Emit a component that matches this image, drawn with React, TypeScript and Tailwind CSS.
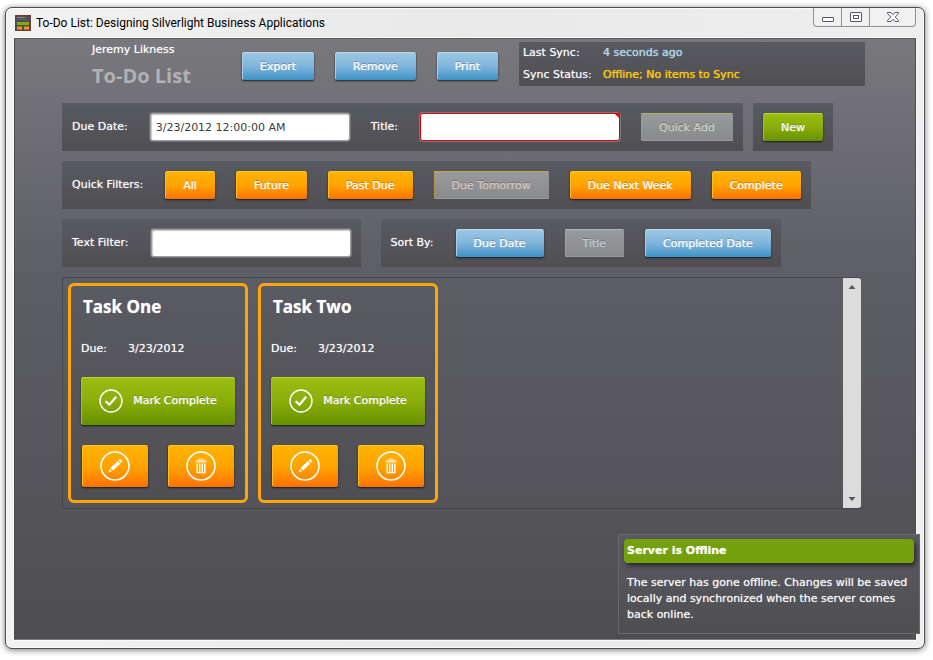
import { useState } from 'react';
import type { InputHTMLAttributes, ReactNode } from 'react';
import clsx from 'clsx';

type Tone = 'blue' | 'orange' | 'green';

const tones: Record<Tone, string> = {
  blue: 'border-t-[#bcdcee] border-l-[#a9d0e8] bg-linear-to-b from-[#9fc8e4] via-[#7fb6da] to-[#3b92c8]',
  orange: 'border-t-[#ffc81e] border-l-[#ffbe1e] bg-linear-to-b from-[#ffb400] via-[#ffa400] to-[#ff7000]',
  green: 'border-t-[#bcd62e] border-l-[#a5c22a] bg-linear-to-b from-[#9cbe11] via-[#8aae0a] to-[#679000]',
};

const disabledTones: Record<Tone, string> = {
  blue: 'border-t-[#9fb9c8] border-l-[#93a5b2] text-[#c0cbd6]',
  orange: 'border-t-[#c9a640] border-l-[#b39b52] text-[#d8c6c0]',
  green: 'border-t-[#a9b35a] border-l-[#9ba355] text-[#cbcec2]',
};

interface ButtonProps {
  tone: Tone;
  children: ReactNode;
  disabled?: boolean;
  className?: string;
  label?: string;
}

function Button({ tone, children, disabled, className = 'h-7 px-[17px] pt-0.5', label }: ButtonProps) {
  return (
    <button
      type="button"
      disabled={disabled}
      aria-label={label}
      className={clsx(
        'flex items-center justify-center border border-transparent whitespace-nowrap [text-shadow:0_-1px_0_rgb(0_0_0/0.3),0_0_1px_currentColor]',
        disabled
          ? ['bg-linear-to-b from-[#999a9d] to-[#898a8c]', disabledTones[tone]]
          : ['rounded-xs text-white bg-origin-border shadow-[0_1px_2px_rgb(0_0_0/0.7)] hover:brightness-105', tones[tone]],
        className,
      )}
    >
      {children}
    </button>
  );
}

function Panel({ children }: { children: ReactNode }) {
  return (
    <div className="flex items-center gap-[21px] p-2.5 bg-linear-to-b from-[#595a62] to-[#4f4f52]">
      {children}
    </div>
  );
}

interface FieldProps extends InputHTMLAttributes<HTMLInputElement> {
  id: string;
  label: string;
  invalid?: boolean;
}

function Field({ id, label, invalid, ...rest }: FieldProps) {
  return (
    <>
      <label htmlFor={id} className="pr-px">{label}</label>
      <div className="relative">
        <input
          id={id}
          type="text"
          aria-invalid={invalid}
          className={clsx(
            'block w-[200px] h-7 px-[5px] rounded-[3px] bg-white text-[#3c3c3c] outline-none',
            invalid
              ? 'border border-[#e80000] shadow-[0_0_0_1px_#77777a]'
              : 'border border-[#9c9c9f] shadow-[inset_1px_1px_1px_#c8c8c8,0_0_0_1px_#747478]',
          )}
          {...rest}
        />
        {invalid && (
          <svg className="absolute top-0 right-0 w-1.5 h-1.5" viewBox="0 0 6 6">
            <path d="M0 0H6V6Z" fill="#e80000" />
          </svg>
        )}
      </div>
    </>
  );
}

function CheckIcon() {
  return (
    <svg className="w-6 h-6" viewBox="0 0 24 24" fill="none" stroke="#fff">
      <circle cx="12" cy="12" r="11" strokeWidth="1.4" />
      <path d="M6.6 12.2L10.4 15.6L17.2 7.8" strokeWidth="2.2" />
    </svg>
  );
}

function PencilIcon() {
  return (
    <svg className="w-[30px] h-[30px]" viewBox="0 0 30 30" fill="none">
      <circle cx="15" cy="15" r="14" stroke="#fff" strokeWidth="1.6" />
      <path d="M10.4 16.9L17.6 10.2L20.2 12.7L13 19.4Z" fill="#fff" />
      <path d="M18.4 9.4L19.6 8.3Q20.4 7.8 21.1 8.5L21.9 9.4Q22.4 10.2 21.7 11L20.9 11.9Z" fill="#fff" />
      <path d="M9.7 18L12 20.3L8.5 21.3Z" fill="#fff" />
    </svg>
  );
}

function TrashIcon() {
  return (
    <svg className="w-[30px] h-[30px]" viewBox="0 0 30 30" fill="none">
      <circle cx="15" cy="15" r="14" stroke="#fff" strokeWidth="1.6" />
      <path d="M9.5 9.2H20.5V11.5H9.5Z" fill="#ffe3b8" />
      <path d="M13 9V8H17V9" stroke="#ffe3b8" strokeWidth="1.2" />
      <path d="M11.2 12.5V21.6H18.8V12.5M13.7 12.5V21.3M16.3 12.5V21.3" stroke="#fff" strokeWidth="1.4" />
    </svg>
  );
}

function TaskCard({ title, due }: { title: string; due: string }) {
  return (
    <article className="w-[180px] border-3 border-[#ffa50a] rounded-md px-2.5 pt-[9px] pb-[13px] bg-linear-to-b from-[#5a5a62] to-[#4f4f53]">
      <h2 className="px-0.5 font-['Open_Sans',sans-serif] font-bold text-[17px] leading-6">{title}</h2>
      <p className="flex mt-[22px]">
        <span className="w-[47px]">Due:</span>
        <span>{due}</span>
      </p>
      <Button tone="green" className="mt-5 w-full h-12 gap-2.5">
        <CheckIcon />
        Mark Complete
      </Button>
      <div className="flex gap-5 mt-5 px-px">
        <Button tone="orange" className="flex-1 h-[42px]" label={`Edit ${title}`}>
          <PencilIcon />
        </Button>
        <Button tone="orange" className="flex-1 h-[42px]" label={`Delete ${title}`}>
          <TrashIcon />
        </Button>
      </div>
    </article>
  );
}

function AppIcon() {
  return (
    <svg className="w-4 h-4" viewBox="0 0 16 16">
      <path d="M0 0H16V16H0Z" fill="#6a3b3b" />
      <path d="M1 1H15V15H1Z" fill="#4c4d52" />
      <path d="M2 2.5H10" stroke="#8e9094" />
      <path d="M2 4.5H13" stroke="#5f6166" />
      <path d="M2 7H14V10H2Z" fill="#85aa0c" />
      <path d="M2 11.5H7V14.5H2ZM9 11.5H14V14.5H9Z" fill="#f79414" />
    </svg>
  );
}

function TitleBar() {
  return (
    <header className="flex items-start h-[30px] pl-[9px] pr-2 text-black">
      <div className="flex items-center gap-[5px] pt-[7px] font-['Roboto',sans-serif] text-xs">
        <AppIcon />
        <h1>To-Do List: Designing Silverlight Business Applications</h1>
      </div>
      <div className="flex ml-auto h-[19px] border border-t-0 border-[#8f8f93] rounded-b-[4px] divide-x divide-[#8f8f93] bg-[#f1f1f1]">
        <button type="button" aria-label="Minimize" className="w-7 flex items-center justify-center">
          <svg className="w-3.5 h-4" viewBox="0 0 14 16">
            <rect x="1.5" y="8.5" width="11" height="4" rx="0.5" fill="#fff" stroke="#53566b" />
          </svg>
        </button>
        <button type="button" aria-label="Maximize" className="w-7 flex items-center justify-center">
          <svg className="w-3.5 h-4" viewBox="0 0 14 16">
            <rect x="1.5" y="3.5" width="11" height="9" rx="0.5" fill="#fff" stroke="#53566b" />
            <rect x="4.5" y="6.5" width="5" height="3" fill="#fff" stroke="#53566b" />
          </svg>
        </button>
        <button type="button" aria-label="Close" className="w-[45px] flex items-center justify-center">
          <svg className="w-3.5 h-4" viewBox="0 0 14 16">
            <path
              d="M1.5 3.5H5L7 5.8L9 3.5H12.5V4.6L9.2 8L12.5 11.4V12.5H9L7 10.2L5 12.5H1.5V11.4L4.8 8L1.5 4.6Z"
              fill="#fff"
              stroke="#53566b"
            />
          </svg>
        </button>
      </div>
    </header>
  );
}

function ScrollBar() {
  return (
    <div className="flex flex-col justify-between w-[18px] ml-auto rounded-r-[3px] bg-[#dcdcdc]">
      <button type="button" aria-label="Scroll up" className="h-[18px] flex items-center justify-center">
        <svg className="w-2 h-1" viewBox="0 0 8 4"><path d="M4 0L7.5 4H0.5Z" fill="#555" /></svg>
      </button>
      <button type="button" aria-label="Scroll down" className="h-[18px] flex items-center justify-center">
        <svg className="w-2 h-1" viewBox="0 0 8 4"><path d="M4 4L7.5 0H0.5Z" fill="#555" /></svg>
      </button>
    </div>
  );
}

const filters = ['All', 'Future', 'Past Due', 'Due Tomorrow', 'Due Next Week', 'Complete'];
const sorts = ['Due Date', 'Title', 'Completed Date'];
const tasks = [
  { title: 'Task One', due: '3/23/2012' },
  { title: 'Task Two', due: '3/23/2012' },
];

export default function App() {
  const [dueDate, setDueDate] = useState('3/23/2012 12:00:00 AM');
  const [title, setTitle] = useState('');
  const [textFilter, setTextFilter] = useState('');

  return (
    <div className="min-h-screen flex bg-white pl-[5px] pt-[7px] pr-2 pb-[11px] font-['DejaVu_Sans',Verdana,sans-serif] text-[11px] leading-4 text-white">
      <div className="flex-1 flex flex-col border border-[#4e4e50] rounded-[7px] bg-[#ebebeb] bg-linear-to-r from-[#f2f2f2] via-[#e9e9e9] to-[#efefef] shadow-[inset_0_0_0_1px_#fafafa,0_1px_6px_rgb(0_0_0/0.55)]">
        <TitleBar />

        <main className="relative flex-1 mx-2 mb-2 border border-t-[#5c5c60] border-x-[#4a4a4e] border-b-[#7a7a7c] outline outline-[#fafafa] bg-linear-to-b from-[#78787d] via-[#5d5d65] via-40% to-[#4e4e52] [text-shadow:0_0_1px_rgb(255_255_255/0.6)]">
          <div className="flex gap-[21px] pl-[77px] pt-[3px]">
            <div className="w-[129px]">
              <p>Jeremy Likness</p>
              <p className="mt-1 font-['Open_Sans',sans-serif] font-bold text-xl leading-7 text-[#b1b1b5] text-shadow-none">To-Do List</p>
            </div>
            <div className="flex items-start gap-[21px] pt-2.5">
              <Button tone="blue">Export</Button>
              <Button tone="blue">Remove</Button>
              <Button tone="blue">Print</Button>
            </div>
            <dl className="grid grid-cols-[80px_1fr] items-center w-[346px] h-11 px-1 bg-linear-to-b from-[#595a62] to-[#4f4f52]">
              <dt>Last Sync:</dt>
              <dd className="text-[#add8e6] [text-shadow:0_0_1px_currentColor]">4 seconds ago</dd>
              <dt>Sync Status:</dt>
              <dd className="text-[#ffc814] [text-shadow:0_0_1px_currentColor]">Offline; No items to Sync</dd>
            </dl>
          </div>

          <div className="flex flex-col gap-2.5 pt-[13px] pl-[47px] pr-[54px]">
            <div className="flex gap-2.5">
              <Panel>
                <Field id="due-date" label="Due Date:" value={dueDate} onChange={e => setDueDate(e.target.value)} />
                <Field id="title" label="Title:" invalid={!title} value={title} onChange={e => setTitle(e.target.value)} />
                <Button tone="green" disabled={!title}>Quick Add</Button>
              </Panel>
              <Panel>
                <Button tone="green">New</Button>
              </Panel>
            </div>

            <div className="flex">
              <Panel>
                <span className="pr-px">Quick Filters:</span>
                {filters.map(f => (
                  <Button key={f} tone="orange" disabled={f === 'Due Tomorrow'}>{f}</Button>
                ))}
              </Panel>
            </div>

            <div className="flex gap-5">
              <Panel>
                <Field id="text-filter" label="Text Filter:" value={textFilter} onChange={e => setTextFilter(e.target.value)} />
              </Panel>
              <Panel>
                <span className="pr-px">Sort By:</span>
                {sorts.map(s => (
                  <Button key={s} tone="blue" disabled={s === 'Title'}>{s}</Button>
                ))}
              </Panel>
            </div>

            <section aria-label="Tasks" className="flex border border-r-0 border-[#47474b] rounded-[3px]">
              <div className="flex gap-2.5 p-[5px]">
                {tasks.map(t => (
                  <TaskCard key={t.title} {...t} />
                ))}
              </div>
              <ScrollBar />
            </section>
          </div>

          {/* Offline notification, hangs over the window frame */}
          <aside role="status" className="absolute -right-[5px] bottom-[5px] w-[302px] border border-[#68686c] px-[5px] pt-1 pb-2.5 bg-linear-to-b from-[#595a62] to-[#4f4f52]">
            <h2 className="px-[3px] py-1 rounded-[4px] bg-[#74a00c] font-bold shadow-[2px_3px_4px_rgb(0_0_0/0.5)]">
              Server is Offline
            </h2>
            <p className="mt-3 px-[3px]">
              The server has gone offline. Changes will be saved locally and synchronized when the server comes back online.
            </p>
          </aside>
        </main>
      </div>
    </div>
  );
}
